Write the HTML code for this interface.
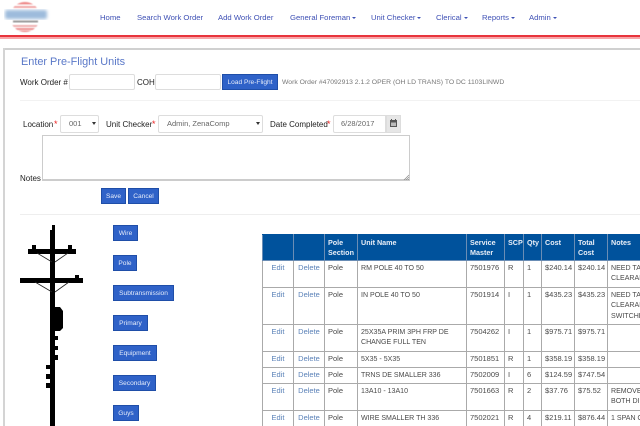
<!DOCTYPE html>
<html><head><meta charset="utf-8"><style>
html,body{margin:0;padding:0;background:#fff;width:640px;height:426px;overflow:hidden;}
#p{position:absolute;left:0;top:0;width:640px;height:426px;overflow:hidden;font-family:"Liberation Sans",sans-serif;font-size:8px;color:#333;background:#fff;}
.a{position:absolute;white-space:nowrap;}
.nav{position:absolute;top:12px;font-size:7.7px;color:#3f51b5;white-space:nowrap;line-height:11px;}
.nav i{display:inline-block;width:0;height:0;border-left:2px solid transparent;border-right:2px solid transparent;border-top:2px solid #3f51b5;margin-left:2px;vertical-align:1.5px;}
.lb{position:absolute;font-size:8px;color:#222;white-space:nowrap;line-height:11px;}
.in{position:absolute;background:#fff;border:1px solid #ddd;border-radius:2px;box-sizing:border-box;font-size:7.5px;color:#666;line-height:16px;padding-left:8px;white-space:nowrap;}
.btn{position:absolute;background:#2f62c8;border:1px solid #1f4ea8;box-sizing:border-box;color:#e6ecfa;font-size:6.6px;text-align:center;white-space:nowrap;height:16px;line-height:15px;}
.r{color:#e22;position:absolute;top:0;font-size:9px;}
.car{position:absolute;width:0;height:0;border-left:2px solid transparent;border-right:2px solid transparent;border-top:3px solid #333;}
table{position:absolute;left:262px;top:234px;border-collapse:collapse;table-layout:fixed;width:379px;font-size:7.5px;color:#4a4a4a;}
td,th{border:1px solid #aaa;padding:2px 3px;vertical-align:top;line-height:10.4px;overflow:hidden;white-space:nowrap;box-sizing:border-box;text-align:left;}
th{background:#00529c;color:#e8eef7;font-weight:bold;border-color:#6a8db5;border-top-color:#00529c;font-size:7.2px;padding:3px 3px 0;}
td.e{color:#5b82b8;text-align:center;}
td.u{font-size:7.05px;padding-top:3px;padding-bottom:0;}
</style></head><body><div id="p">

<svg class="a" style="left:4px;top:0" width="50" height="34" viewBox="0 0 50 34">
<defs><filter id="b"><feGaussianBlur stdDeviation="1.6"/></filter><filter id="b2"><feGaussianBlur stdDeviation="0.5"/></filter></defs>
<g filter="url(#b2)"><clipPath id="c"><circle cx="21" cy="17" r="15"/></clipPath>
<g clip-path="url(#c)"><rect width="50" height="34" fill="#fff"/>
<rect y="2" width="50" height="2.5" fill="#e88"/><rect y="6" width="50" height="2" fill="#f0a0a0"/>
<rect y="25" width="50" height="2" fill="#eaa"/><rect y="28" width="50" height="2" fill="#e88"/><rect y="30.5" width="50" height="2" fill="#e88"/></g></g>
<rect x="1" y="10" width="42" height="9" rx="2" fill="#9dbbdc" filter="url(#b)"/>
<rect x="9" y="20.5" width="25" height="2" fill="#999" filter="url(#b2)"/>
</svg>

<div class="nav" style="left:100px">Home</div>
<div class="nav" style="left:137px">Search Work Order</div>
<div class="nav" style="left:218px">Add Work Order</div>
<div class="nav" style="left:290px">General Foreman<i></i></div>
<div class="nav" style="left:371px">Unit Checker<i></i></div>
<div class="nav" style="left:436px">Clerical<i></i></div>
<div class="nav" style="left:482px">Reports<i></i></div>
<div class="nav" style="left:529px">Admin<i></i></div>

<div class="a" style="left:0;top:35px;width:640px;height:2px;background:#e8343c"></div>
<div class="a" style="left:0;top:37px;width:640px;height:2px;background:#f7a5a8"></div>

<div class="a" style="left:3px;top:48px;width:637px;height:2px;background:#d0d0d0"></div>
<div class="a" style="left:3px;top:48px;width:2px;height:378px;background:#d4d4d4"></div>

<div class="a" style="left:21px;top:55px;font-size:10.9px;line-height:15px;color:#5a78c8">Enter Pre-Flight Units</div>

<div class="lb" style="left:20px;top:77px">Work Order #</div>
<div class="in" style="left:69px;top:74px;width:66px;height:16px"></div>
<div class="lb" style="left:137px;top:77px">COH</div>
<div class="in" style="left:155px;top:74px;width:66px;height:16px"></div>
<div class="btn" style="left:222px;top:74px;width:56px">Load Pre-Flight</div>
<div class="a" style="left:282px;top:77px;font-size:6.8px;line-height:11px;color:#777">Work Order #47092913 2.1.2 OPER (OH LD TRANS) TO DC 1103LINWD</div>

<div class="a" style="left:20px;top:100px;width:620px;height:1px;background:#f2f2f2"></div>

<div class="lb" style="left:23px;top:119px">Location<span class="r" style="left:31px">*</span></div>
<div class="in" style="left:60px;top:115px;width:39px;height:18px;line-height:16px">001</div><div class="car" style="left:92px;top:122px"></div>
<div class="lb" style="left:106px;top:119px">Unit Checker<span class="r" style="left:46px">*</span></div>
<div class="in" style="left:158px;top:115px;width:105px;height:18px;line-height:16px">Admin, ZenaComp</div><div class="car" style="left:256px;top:122px"></div>
<div class="lb" style="left:270px;top:119px">Date Completed<span class="r" style="left:57px">*</span></div>
<div class="in" style="left:333px;top:115px;width:53px;height:18px;line-height:16px;padding-left:7px;border-radius:2px 0 0 2px">6/28/2017</div>
<div class="a" style="left:386px;top:115px;width:15px;height:18px;background:#e6e6e6;border:1px solid #ddd;box-sizing:border-box"></div>
<svg class="a" style="left:389px;top:119px" width="9" height="9" viewBox="0 0 9 9"><rect x="1" y="1" width="7" height="7" fill="#555"/><rect x="2" y="3.5" width="5" height="3.5" fill="#bbb"/><rect x="2" y="0" width="1" height="2" fill="#555"/><rect x="6" y="0" width="1" height="2" fill="#555"/></svg>

<div class="a" style="left:42px;top:135px;width:368px;height:46px;background:#fff;border:1px solid #ccc;border-bottom-width:2px;box-sizing:border-box"></div>
<svg class="a" style="left:403px;top:174px" width="6" height="6"><path d="M1 6L6 1M3 6L6 3M5 6L6 5" stroke="#888" stroke-width=".7"/></svg>
<div class="lb" style="left:20px;top:173px">Notes</div>

<div class="btn" style="left:101px;top:188px;width:25px">Save</div>
<div class="btn" style="left:128px;top:188px;width:31px">Cancel</div>

<div class="a" style="left:20px;top:214px;width:620px;height:1px;background:#eee"></div>

<svg class="a" style="left:0;top:216px" width="100" height="210" viewBox="0 0 100 210">
<g fill="#000">
<rect x="50" y="14" width="5" height="196"/>
<rect x="52" y="9" width="3" height="8"/>
<rect x="28" y="33" width="48" height="5"/>
<rect x="32" y="29" width="4" height="5"/><rect x="68" y="29" width="4" height="5"/>
<rect x="20" y="62" width="63" height="5"/>
<rect x="75" y="59" width="4" height="4"/>
<path d="M54 91H60L63 95V112L60 115H54Z"/>
<rect x="54" y="120" width="4" height="4"/><rect x="54" y="130" width="4" height="4"/><rect x="54" y="139" width="4" height="5"/>
<rect x="46" y="149" width="5" height="4"/><rect x="46" y="158" width="5" height="5"/><rect x="46" y="167" width="5" height="5"/>
</g>
<path d="M37 37L52 46M68 37L55 46M35 66L52 76M69 66L55 76" stroke="#222" stroke-width=".8" fill="none"/>
</svg>

<div class="btn" style="left:113px;top:225px;width:25px">Wire</div>
<div class="btn" style="left:113px;top:255px;width:24px">Pole</div>
<div class="btn" style="left:113px;top:285px;width:61px">Subtransmission</div>
<div class="btn" style="left:113px;top:315px;width:35px">Primary</div>
<div class="btn" style="left:113px;top:345px;width:44px">Equipment</div>
<div class="btn" style="left:113px;top:375px;width:43px">Secondary</div>
<div class="btn" style="left:113px;top:405px;width:26px">Guys</div>

<table>
<colgroup><col style="width:31px"><col style="width:31px"><col style="width:33px"><col style="width:109px"><col style="width:38px"><col style="width:19px"><col style="width:18px"><col style="width:33px"><col style="width:33px"><col style="width:34px"></colgroup>
<tr style="height:26px"><th></th><th></th><th>Pole<br>Section</th><th>Unit Name</th><th>Service<br>Master</th><th>SCP</th><th>Qty</th><th>Cost</th><th>Total<br>Cost</th><th>Notes</th></tr>
<tr style="height:27px"><td class="e">Edit</td><td class="e">Delete</td><td>Pole</td><td class="u">RM POLE 40 TO 50</td><td>7501976</td><td>R</td><td>1</td><td>$240.14</td><td>$240.14</td><td class="u">NEED TAG<br>CLEARANCE</td></tr>
<tr style="height:37px"><td class="e">Edit</td><td class="e">Delete</td><td>Pole</td><td class="u">IN POLE 40 TO 50</td><td>7501914</td><td>I</td><td>1</td><td>$435.23</td><td>$435.23</td><td class="u">NEED TAG<br>CLEARANCE<br>SWITCHES</td></tr>
<tr style="height:27px"><td class="e">Edit</td><td class="e">Delete</td><td>Pole</td><td class="u">25X35A PRIM 3PH FRP DE<br>CHANGE FULL TEN</td><td>7504262</td><td>I</td><td>1</td><td>$975.71</td><td>$975.71</td><td></td></tr>
<tr style="height:16px"><td class="e">Edit</td><td class="e">Delete</td><td>Pole</td><td class="u">5X35 - 5X35</td><td>7501851</td><td>R</td><td>1</td><td>$358.19</td><td>$358.19</td><td></td></tr>
<tr style="height:16px"><td class="e">Edit</td><td class="e">Delete</td><td>Pole</td><td class="u">TRNS DE SMALLER 336</td><td>7502009</td><td>I</td><td>6</td><td>$124.59</td><td>$747.54</td><td></td></tr>
<tr style="height:27px"><td class="e">Edit</td><td class="e">Delete</td><td>Pole</td><td class="u">13A10 - 13A10</td><td>7501663</td><td>R</td><td>2</td><td>$37.76</td><td>$75.52</td><td class="u">REMOVE<br>BOTH DIR</td></tr>
<tr style="height:16px"><td class="e">Edit</td><td class="e">Delete</td><td>Pole</td><td class="u">WIRE SMALLER TH 336</td><td>7502021</td><td>R</td><td>4</td><td>$219.11</td><td>$876.44</td><td class="u">1 SPAN OF</td></tr>
</table>
</div></body></html>
